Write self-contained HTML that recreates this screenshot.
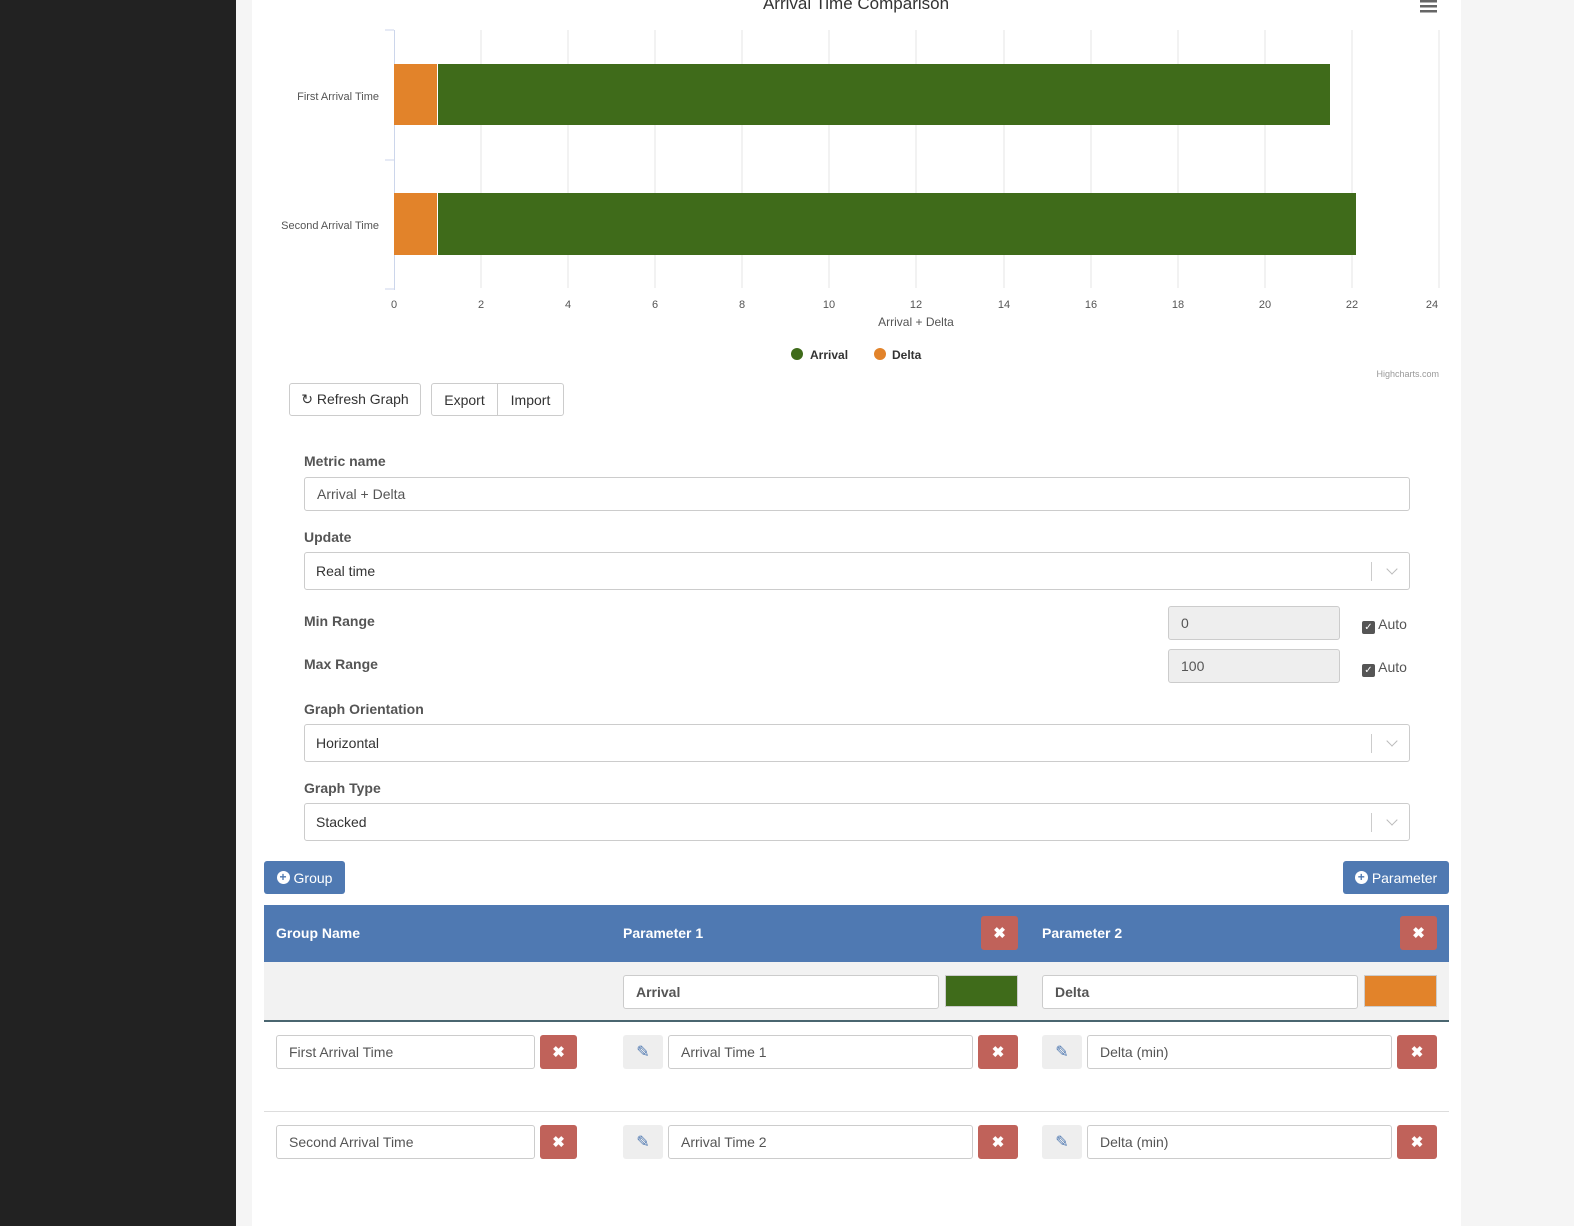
<!DOCTYPE html>
<html><head><meta charset="utf-8"><style>
*{box-sizing:border-box;margin:0;padding:0}
body{width:1574px;height:1226px;position:relative;background:#f5f5f5;font-family:"Liberation Sans",Arial,sans-serif;overflow:hidden}
.sb{position:absolute;left:0;top:0;width:236px;height:1226px;background:#222}
.panel{position:absolute;left:252px;top:0;width:1209px;height:1226px;background:#fff}
.a{position:absolute}
.lbl{position:absolute;left:304px;font-size:14px;font-weight:bold;color:#555}
.inp{position:absolute;border:1px solid #ccc;border-radius:3px;background:#fff;font-size:14px;color:#555;padding-left:12px;display:flex;align-items:center}
.sel{position:absolute;left:304px;width:1106px;height:38px;border:1px solid #ccc;border-radius:3px;font-size:14px;color:#333;padding-left:11px;display:flex;align-items:center}
.sel:after{content:"";position:absolute;right:37px;top:9px;height:19px;border-left:1px solid #ccc}
.chev{position:absolute;right:13px;top:12px;width:8px;height:8px;border-right:1.5px solid #bbb;border-bottom:1.5px solid #bbb;transform:rotate(45deg)}
.btn{position:absolute;border:1px solid #ccc;border-radius:3px;background:#fff;font-size:14px;color:#333;display:flex;align-items:center;justify-content:center}
.bb{position:absolute;background:#4f79b2;border-radius:3px;color:#fff;font-size:14px;display:flex;align-items:center;justify-content:center;gap:4px}
.x{position:absolute;width:37px;height:34px;background:#c0625a;border-radius:3px;color:#fff;font-weight:bold;font-size:15px;display:flex;align-items:center;justify-content:center}
.ed{position:absolute;width:40px;height:34px;background:#eee;border-radius:3px;display:flex;align-items:center;justify-content:center}
.plus{width:13px;height:13px;border-radius:50%;background:#fff;color:#4f79b2;font-size:12px;font-weight:bold;line-height:13px;text-align:center}
</style></head><body>
<div class="sb"></div>
<div class="panel"></div>
<svg class="a" style="left:0;top:0" width="1574" height="380" font-family="Liberation Sans,sans-serif">
<text x="856" y="9" font-size="17" text-anchor="middle" fill="#333">Arrival Time Comparison</text>
<g fill="#666"><rect x="1420" y="0" width="17" height="2.5"/><rect x="1420" y="5" width="17" height="2.5"/><rect x="1420" y="10" width="17" height="2.5"/></g>
<g stroke="#e6e6e6" stroke-width="1">
<line x1="481" y1="30" x2="481" y2="288"/><line x1="568" y1="30" x2="568" y2="288"/><line x1="655" y1="30" x2="655" y2="288"/><line x1="742" y1="30" x2="742" y2="288"/><line x1="829" y1="30" x2="829" y2="288"/><line x1="916" y1="30" x2="916" y2="288"/><line x1="1004" y1="30" x2="1004" y2="288"/><line x1="1091" y1="30" x2="1091" y2="288"/><line x1="1178" y1="30" x2="1178" y2="288"/><line x1="1265" y1="30" x2="1265" y2="288"/><line x1="1352" y1="30" x2="1352" y2="288"/><line x1="1439" y1="30" x2="1439" y2="288"/>
</g>
<g stroke="#ccd6eb"><line x1="394.5" y1="30" x2="394.5" y2="290"/><line x1="385" y1="30" x2="394" y2="30"/><line x1="385" y1="160" x2="394" y2="160"/><line x1="385" y1="289" x2="394" y2="289"/></g>
<rect x="394" y="64" width="43" height="61" fill="#e2832a"/><rect x="438" y="64" width="892" height="61" fill="#3f6b1a"/>
<rect x="394" y="193" width="43" height="62" fill="#e2832a"/><rect x="438" y="193" width="918" height="62" fill="#3f6b1a"/>
<g font-size="11" fill="#555" text-anchor="end"><text x="379" y="100">First Arrival Time</text><text x="379" y="229">Second Arrival Time</text></g>
<g font-size="11" fill="#555" text-anchor="middle"><text x="394" y="308">0</text><text x="481" y="308">2</text><text x="568" y="308">4</text><text x="655" y="308">6</text><text x="742" y="308">8</text><text x="829" y="308">10</text><text x="916" y="308">12</text><text x="1004" y="308">14</text><text x="1091" y="308">16</text><text x="1178" y="308">18</text><text x="1265" y="308">20</text><text x="1352" y="308">22</text><text x="1432" y="308">24</text></g>
<text x="916" y="326" font-size="12" fill="#555" text-anchor="middle">Arrival + Delta</text>
<circle cx="797" cy="354" r="6" fill="#3f6b1a"/><text x="810" y="359" font-size="12" font-weight="bold" fill="#333">Arrival</text>
<circle cx="880" cy="354" r="6" fill="#e2832a"/><text x="892" y="359" font-size="12" font-weight="bold" fill="#333">Delta</text>
<text x="1439" y="377" font-size="9" fill="#999" text-anchor="end">Highcharts.com</text>
</svg>
<div class="btn" style="left:289px;top:383px;width:132px;height:33px">&#x21bb;&nbsp;Refresh Graph</div>
<div class="btn" style="left:431px;top:383px;width:67px;height:33px;border-radius:3px 0 0 3px">Export</div>
<div class="btn" style="left:497px;top:383px;width:67px;height:33px;border-radius:0 3px 3px 0">Import</div>
<div class="lbl" style="top:453px">Metric name</div>
<div class="inp" style="left:304px;top:477px;width:1106px;height:34px">Arrival + Delta</div>
<div class="lbl" style="top:529px">Update</div>
<div class="sel" style="top:552px">Real time<div class="chev"></div></div>
<div class="lbl" style="top:613px">Min Range</div>
<div class="inp" style="left:1168px;top:606px;width:172px;height:34px;background:#eee">0</div>
<div class="a" style="left:1362px;top:616px;font-size:14px;color:#555"><span style="display:inline-block;width:13px;height:13px;background:#555;border-radius:2px;color:#fff;font-size:10px;text-align:center;line-height:13px;vertical-align:-1px">✓</span> Auto</div>
<div class="lbl" style="top:656px">Max Range</div>
<div class="inp" style="left:1168px;top:649px;width:172px;height:34px;background:#eee">100</div>
<div class="a" style="left:1362px;top:659px;font-size:14px;color:#555"><span style="display:inline-block;width:13px;height:13px;background:#555;border-radius:2px;color:#fff;font-size:10px;text-align:center;line-height:13px;vertical-align:-1px">✓</span> Auto</div>
<div class="lbl" style="top:701px">Graph Orientation</div>
<div class="sel" style="top:724px">Horizontal<div class="chev"></div></div>
<div class="lbl" style="top:780px">Graph Type</div>
<div class="sel" style="top:803px">Stacked<div class="chev"></div></div>
<div class="bb" style="left:264px;top:861px;width:81px;height:33px"><span class="plus">+</span>Group</div>
<div class="bb" style="left:1343px;top:861px;width:106px;height:33px"><span class="plus">+</span>Parameter</div>
<div class="a" style="left:264px;top:905px;width:1185px;height:57px;background:#4f79b2"></div>
<div class="a" style="left:276px;top:925px;color:#fff;font-weight:bold;font-size:14px">Group Name</div>
<div class="a" style="left:623px;top:925px;color:#fff;font-weight:bold;font-size:14px">Parameter 1</div>
<div class="a" style="left:1042px;top:925px;color:#fff;font-weight:bold;font-size:14px">Parameter 2</div>
<div class="x" style="left:981px;top:916px">✖</div>
<div class="x" style="left:1400px;top:916px">✖</div>
<div class="a" style="left:264px;top:962px;width:1185px;height:59px;background:#f2f2f2"></div>
<div class="a" style="left:264px;top:1020px;width:1185px;height:2px;background:#4a6670"></div>
<div class="inp" style="left:623px;top:975px;width:316px;height:34px;font-weight:bold">Arrival</div>
<div class="a" style="left:945px;top:975px;width:73px;height:32px;background:#3f6b1a;border:1px solid #ccc"></div>
<div class="inp" style="left:1042px;top:975px;width:316px;height:34px;font-weight:bold">Delta</div>
<div class="a" style="left:1364px;top:975px;width:73px;height:32px;background:#e2832a;border:1px solid #ccc"></div>
<div class="a" style="left:264px;top:1111px;width:1185px;height:1px;background:#ddd"></div>
<div class="inp" style="left:276px;top:1035px;width:259px;height:34px">First Arrival Time</div>
<div class="x" style="left:540px;top:1035px">✖</div>
<div class="ed" style="left:623px;top:1035px;color:#4f79b2">✎</div>
<div class="inp" style="left:668px;top:1035px;width:305px;height:34px">Arrival Time 1</div>
<div class="x" style="left:978px;top:1035px;width:40px">✖</div>
<div class="ed" style="left:1042px;top:1035px;color:#4f79b2">✎</div>
<div class="inp" style="left:1087px;top:1035px;width:305px;height:34px">Delta (min)</div>
<div class="x" style="left:1397px;top:1035px;width:40px">✖</div>
<div class="inp" style="left:276px;top:1125px;width:259px;height:34px">Second Arrival Time</div>
<div class="x" style="left:540px;top:1125px">✖</div>
<div class="ed" style="left:623px;top:1125px;color:#4f79b2">✎</div>
<div class="inp" style="left:668px;top:1125px;width:305px;height:34px">Arrival Time 2</div>
<div class="x" style="left:978px;top:1125px;width:40px">✖</div>
<div class="ed" style="left:1042px;top:1125px;color:#4f79b2">✎</div>
<div class="inp" style="left:1087px;top:1125px;width:305px;height:34px">Delta (min)</div>
<div class="x" style="left:1397px;top:1125px;width:40px">✖</div>
</body></html>
